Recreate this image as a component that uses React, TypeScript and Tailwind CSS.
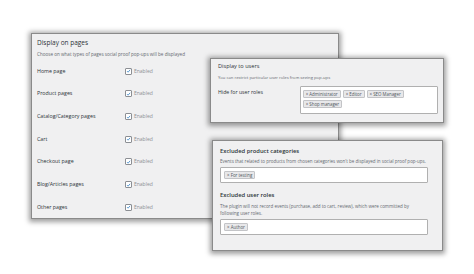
import React from "react";

const font = { fontFamily: '"Open Sans", "Noto Sans", sans-serif' };

function Check() {
  return (
    <span className="flex h-[7px] w-[7px] items-center justify-center rounded-[1px] border-[0.5px] border-[#8c8f94] bg-white">
      <svg viewBox="0 0 10 10" className="h-[6px] w-[6px]">
        <path d="M2 5.2 L4.2 7.4 L8.2 2.6" fill="none" stroke="#3582c4" strokeWidth="1.6" />
      </svg>
    </span>
  );
}

function Tag({ label }: { label: string }) {
  return (
    <span className="flex h-[8px] items-center rounded-[1px] border-[0.5px] border-[#c3c4c7] bg-[#e8e8ea] px-[2px] text-[4.4px] leading-none text-[#50575e]">
      × {label}
    </span>
  );
}

const rows = [
  "Home page",
  "Product pages",
  "Catalog/Category pages",
  "Cart",
  "Checkout page",
  "Blog/Articles pages",
  "Other pages",
];

const shadow = "shadow-[0_1px_5px_2px_rgba(0,0,0,0.38)]";

export default function App() {
  return (
    <div className="relative h-[274px] w-[474px] overflow-hidden bg-white text-[#2c3338]" style={font}>
      {/* Panel 1 */}
      <div className={`absolute left-[31px] top-[33px] flex h-[186px] w-[308px] flex-col border-[0.5px] border-[#8a8a8a] bg-[#f0f0f1] pl-[5px] pt-[4px] ${shadow}`}>
        <div className="text-[6.5px] leading-[9px]">Display on pages</div>
        <div className="mt-[4px] text-[4.6px] leading-[6px] text-[#646970]">
          Choose on what types of pages social proof pop-ups will be displayed
        </div>
        <div className="mt-[3px] flex flex-col">
          {rows.map((r) => (
            <div key={r} className="flex h-[22.65px] items-center">
              <div className="w-[88px] text-[5.3px] font-medium leading-none">{r}</div>
              <Check />
              <span className="ml-[2px] text-[5px] leading-none text-[#8c8f94]">Enabled</span>
            </div>
          ))}
        </div>
      </div>

      {/* Panel 2 */}
      <div className={`absolute left-[210px] top-[58px] flex h-[65px] w-[234px] flex-col border-[0.5px] border-[#8a8a8a] bg-[#f0f0f1] pl-[7px] pr-[5px] pt-[3px] ${shadow}`}>
        <div className="text-[5.6px] leading-[8px]">Display to users</div>
        <div className="mt-[5px] text-[4.2px] leading-[5px] text-[#646970]">
          You can restrict particular user roles from seeing pop-ups
        </div>
        <div className="mt-[6px] flex">
          <div className="w-[82px] pt-[4px] text-[5.2px] font-medium leading-none">Hide for user roles</div>
          <div className="flex h-[28px] w-[139px] flex-wrap content-start gap-x-[2px] gap-y-[2px] rounded-[1px] border-[0.5px] border-[#b0b0b0] bg-white p-[2px] pt-[3px]">
            <Tag label="Administrator" />
            <Tag label="Editor" />
            <Tag label="SEO Manager" />
            <Tag label="Shop manager" />
          </div>
        </div>
      </div>

      {/* Panel 3 */}
      <div className={`absolute left-[212px] top-[140px] flex h-[111px] w-[231px] flex-col border-[0.5px] border-[#8a8a8a] bg-[#f0f0f1] pl-[7px] pr-[5px] pt-[6px] ${shadow}`}>
        <div className="text-[5.8px] font-semibold leading-[8px]">Excluded product categories</div>
        <div className="mt-[3px] whitespace-nowrap text-[4.5px] leading-[6px] text-[#646970]">
          Events that related to products from chosen categories won't be displayed in social proof pop-ups.
        </div>
        <div className="mt-[3px] flex h-[16px] w-[208px] items-center rounded-[1px] border-[0.5px] border-[#b0b0b0] bg-white px-[3px]">
          <Tag label="For testing" />
        </div>
        <div className="mt-[8px] text-[5.8px] font-semibold leading-[8px]">Excluded user roles</div>
        <div className="mt-[4px] w-[202px] text-[4.5px] leading-[7px] text-[#646970]">
          The plugin will not record events (purchase, add to cart, review), which were committed by following user roles.
        </div>
        <div className="mt-[2px] flex h-[16px] w-[208px] items-center rounded-[1px] border-[0.5px] border-[#b0b0b0] bg-white px-[3px]">
          <Tag label="Author" />
        </div>
      </div>
    </div>
  );
}
